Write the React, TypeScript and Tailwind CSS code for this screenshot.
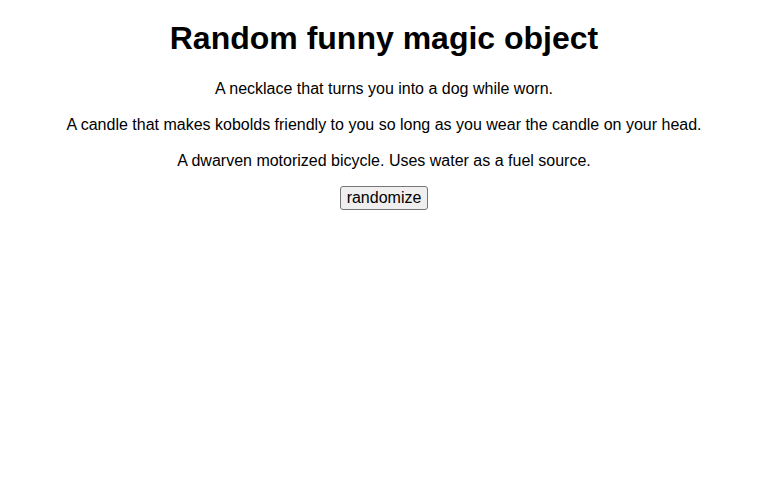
import { useState } from 'react'

const ITEMS = [
  'A necklace that turns you into a dog while worn.',
  'A candle that makes kobolds friendly to you so long as you wear the candle on your head.',
  'A dwarven motorized bicycle. Uses water as a fuel source.',
  'A spoon that screams whenever it touches soup.',
  'A hat that makes every bird nearby think you are their mother.',
  'A pair of boots that leave tiny glowing footprints for one hour.',
]

function pick(n: number) {
  const pool = [...ITEMS]
  const out: string[] = []
  while (out.length < n && pool.length) {
    out.push(pool.splice(Math.floor(Math.random() * pool.length), 1)[0])
  }
  return out
}

export default function App() {
  const [items, setItems] = useState(ITEMS.slice(0, 3))

  return (
    <div className="min-h-screen bg-white text-black font-['Liberation_Sans',Arial,sans-serif] text-center pt-[20px]">
      <h1 className="text-[32px] font-bold leading-[normal] mb-[22px]">Random funny magic object</h1>
      <div className="flex flex-col items-center gap-4 text-base leading-5">
        {items.map(t => (
          <p key={t}>{t}</p>
        ))}
        <button
          className="-mt-px border border-[#767676] rounded-[3px] bg-[#efefef] px-[6px] py-px leading-5 text-black"
          onClick={() => setItems(pick(3))}>
          randomize
        </button>
      </div>
    </div>
  )
}
